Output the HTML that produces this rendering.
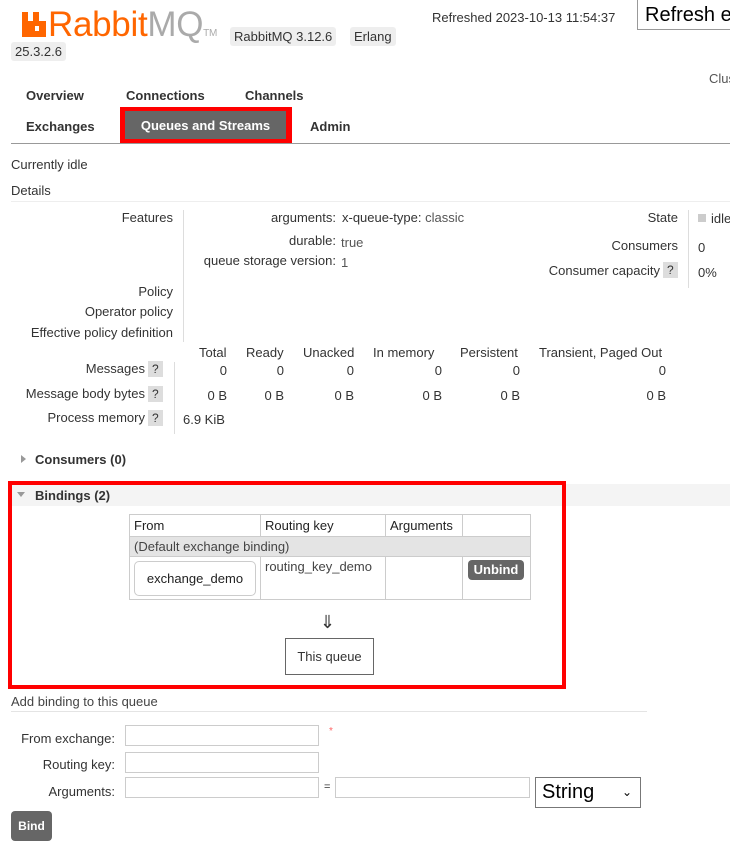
<!DOCTYPE html>
<html><head><style>
body{margin:0;width:730px;height:853px;overflow:hidden;background:#fff;font-family:"Liberation Sans","DejaVu Sans",sans-serif;font-size:13px;color:#333;position:relative}
.a{position:absolute;white-space:nowrap}
.r{text-align:right}
.b{font-weight:bold;color:#333}
.tag{background:#eee;border-radius:3px;padding:2px 4px}
.q{background:#ddd;padding:1px 4px;font-size:12px}
.inp{position:absolute;height:19px;border:1px solid #ccc;background:#fff}
.vl{position:absolute;width:1px;background:#ddd}
td{box-sizing:border-box}
</style></head><body>
<svg class="a" style="left:22px;top:12px" width="24" height="25" viewBox="0 0 24 25"><path d="M0 0h6v9h5V0h6v9h7v16H0z M13 14v5h4v-5z" fill="#f60" fill-rule="evenodd"/></svg>
<div class="a" style="left:48px;top:5px;font-size:35px;color:#f60;letter-spacing:-0.3px">Rabbit<span style="color:#aaa">MQ</span><span style="font-size:10px;color:#aaa">TM</span></div>
<div class="a tag" style="left:230px;top:27px">RabbitMQ 3.12.6</div>
<div class="a tag" style="left:350px;top:27px">Erlang</div>
<div class="a tag" style="left:11px;top:42px">25.3.2.6</div>
<div class="a" style="left:432px;top:10px">Refreshed 2023-10-13 11:54:37</div>
<div class="a" style="left:637px;top:-1px;width:100px;height:31px;border:1px solid #999;font-size:20px;color:#000;padding-left:7px;line-height:30px;box-sizing:border-box">Refresh e</div>
<div class="a" style="left:709px;top:71px;color:#555">Clus</div>
<div class="a b" style="left:26px;top:88px">Overview</div>
<div class="a b" style="left:126px;top:88px">Connections</div>
<div class="a b" style="left:245px;top:88px">Channels</div>
<div class="a b" style="left:26px;top:119px">Exchanges</div>
<div class="a" style="left:120px;top:107px;width:172px;height:37px;background:#f00"></div>
<div class="a b" style="left:125px;top:111px;width:161px;height:28px;background:#666;color:#fff;line-height:30px;text-align:center">Queues and Streams</div>
<div class="a b" style="left:310px;top:119px">Admin</div>
<div class="a" style="left:11px;top:143px;width:719px;height:1px;background:#999"></div>
<div class="a" style="left:11px;top:157px">Currently idle</div>
<div class="a" style="left:11px;top:183px">Details</div>
<div class="a" style="left:11px;top:201px;width:719px;height:1px;background:#eee"></div>
<div class="a r" style="left:0;width:173px;top:210px">Features</div>
<div class="vl" style="left:183px;top:210px;height:132px"></div>
<div class="a r" style="left:180px;width:156px;top:210px">arguments:</div>
<div class="a" style="left:342px;top:210px">x-queue-type: <span style="color:#555">classic</span></div>
<div class="a r" style="left:180px;width:156px;top:233px">durable:</div>
<div class="a" style="left:341px;top:235px;color:#555">true</div>
<div class="a r" style="left:180px;width:156px;top:253px">queue storage version:</div>
<div class="a" style="left:341px;top:255px;color:#555">1</div>
<div class="a r" style="left:500px;width:178px;top:210px">State</div>
<div class="a r" style="left:500px;width:178px;top:238px">Consumers</div>
<div class="a r" style="left:500px;width:160px;top:263px">Consumer capacity</div>
<div class="a q" style="left:663px;top:262px">?</div>
<div class="vl" style="left:688px;top:210px;height:78px"></div>
<div class="a" style="left:698px;top:214px;width:8px;height:8px;background:#ccc"></div>
<div class="a" style="left:711px;top:211px">idle</div>
<div class="a" style="left:698px;top:240px">0</div>
<div class="a" style="left:698px;top:265px">0%</div>
<div class="a r" style="left:0;width:173px;top:284px">Policy</div>
<div class="a r" style="left:0;width:173px;top:304px">Operator policy</div>
<div class="a r" style="left:0;width:173px;top:325px">Effective policy definition</div>
<div class="a" style="left:199px;top:345px">Total</div>
<div class="a" style="left:246px;top:345px">Ready</div>
<div class="a" style="left:303px;top:345px">Unacked</div>
<div class="a" style="left:373px;top:345px">In memory</div>
<div class="a" style="left:460px;top:345px">Persistent</div>
<div class="a" style="left:539px;top:345px">Transient, Paged Out</div>
<div class="vl" style="left:174px;top:362px;height:72px"></div>
<div class="a r" style="left:0;width:145px;top:361px">Messages</div><div class="a q" style="left:148px;top:361px">?</div>
<div class="a r" style="left:0;width:145px;top:386px">Message body bytes</div><div class="a q" style="left:148px;top:386px">?</div>
<div class="a r" style="left:0;width:145px;top:410px">Process memory</div><div class="a q" style="left:148px;top:410px">?</div>
<div class="a r" style="left:150px;width:77px;top:363px">0</div><div class="a r" style="left:200px;width:84px;top:363px">0</div><div class="a r" style="left:260px;width:94px;top:363px">0</div><div class="a r" style="left:350px;width:92px;top:363px">0</div><div class="a r" style="left:420px;width:100px;top:363px">0</div><div class="a r" style="left:560px;width:106px;top:363px">0</div>
<div class="a r" style="left:150px;width:77px;top:388px">0 B</div><div class="a r" style="left:200px;width:84px;top:388px">0 B</div><div class="a r" style="left:260px;width:94px;top:388px">0 B</div><div class="a r" style="left:350px;width:92px;top:388px">0 B</div><div class="a r" style="left:420px;width:100px;top:388px">0 B</div><div class="a r" style="left:560px;width:106px;top:388px">0 B</div>
<div class="a" style="left:183px;top:412px">6.9 KiB</div>
<div class="a" style="left:21px;top:455px;width:0;height:0;border-left:5px solid #999;border-top:4px solid transparent;border-bottom:4px solid transparent"></div>
<div class="a b" style="left:35px;top:452px">Consumers (0)</div>
<div class="a" style="left:12px;top:484px;width:718px;height:22px;background:#f4f4f4"></div>
<div class="a" style="left:8px;top:481px;width:550px;height:200px;border:4px solid #f00"></div>
<div class="a" style="left:17px;top:492px;width:0;height:0;border-top:5px solid #999;border-left:4px solid transparent;border-right:4px solid transparent"></div>
<div class="a b" style="left:35px;top:488px">Bindings (2)</div>
<table class="a" style="left:129px;top:514px;width:401px;border-collapse:collapse;table-layout:fixed;font-size:13px;color:#222">
<colgroup><col style="width:131px"><col style="width:125px"><col style="width:77px"><col style="width:68px"></colgroup>
<tr style="height:22px"><td style="border:1px solid #ccc;padding:0 4px">From</td><td style="border:1px solid #ccc;padding:0 4px">Routing key</td><td style="border:1px solid #ccc;padding:0 4px">Arguments</td><td style="border:1px solid #ccc"></td></tr>
<tr style="height:20px;background:#e4e4e4"><td colspan="4" style="border:1px solid #ccc;padding:0 4px;color:#444">(Default exchange binding)</td></tr>
<tr style="height:43px"><td style="border:1px solid #ccc;padding:3px 4px"><div style="border:1px solid #ccc;border-radius:5px;height:33px;line-height:33px;text-align:center">exchange_demo</div></td><td style="border:1px solid #ccc;padding:2px 4px;vertical-align:top;color:#444">routing_key_demo</td><td style="border:1px solid #ccc"></td><td style="border:1px solid #ccc;vertical-align:top;padding-top:3px"><div style="background:#666;color:#fff;font-weight:bold;border-radius:4px;width:56px;height:20px;line-height:20px;text-align:center;margin-left:4px">Unbind</div></td></tr>
</table>
<div class="a" style="left:320px;top:612px;font-size:18px;color:#333">⇓</div>
<div class="a" style="left:285px;top:638px;width:87px;height:35px;border:1px solid #666;line-height:35px;text-align:center">This queue</div>
<div class="a" style="left:11px;top:694px;color:#444">Add binding to this queue</div>
<div class="a" style="left:11px;top:711px;width:636px;height:1px;background:#e4e4e4"></div>
<div class="a r" style="left:0;width:115px;top:731px">From exchange:</div>
<div class="inp" style="left:125px;top:725px;width:192px"></div>
<div class="a" style="left:329px;top:726px;color:#f66;font-size:10px">*</div>
<div class="a r" style="left:0;width:115px;top:757px">Routing key:</div>
<div class="inp" style="left:125px;top:752px;width:192px"></div>
<div class="a r" style="left:0;width:115px;top:784px">Arguments:</div>
<div class="inp" style="left:125px;top:777px;width:192px"></div>
<div class="a" style="left:324px;top:781px;font-size:11px">=</div>
<div class="inp" style="left:335px;top:777px;width:193px"></div>
<div class="a" style="left:535px;top:777px;width:106px;height:31px;border:1px solid #777;font-size:20px;color:#000;line-height:29px;padding-left:6px;box-sizing:border-box">String<span style="position:absolute;right:8px;top:0;font-size:12px">&#8964;</span></div>
<div class="a" style="left:11px;top:811px;width:41px;height:30px;background:#666;border-radius:4px;color:#fff;font-weight:bold;font-size:12px;line-height:30px;text-align:center">Bind</div>
</body></html>
